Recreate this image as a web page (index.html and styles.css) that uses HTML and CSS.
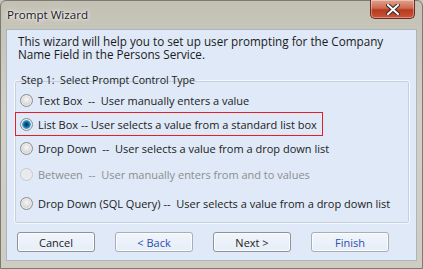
FILE: index.html
```html
<!DOCTYPE html>
<html lang="en">

<head>
    <meta charset="UTF-8" />
    <title>Prompt Wizard</title>
    <link rel="stylesheet" href="styles.css">
</head>

<body>
    <div class="window">
        <div class="titlebar">
            <div class="title">Prompt Wizard</div>
            <button class="close" aria-label="Close">
                <svg width="14" height="11" viewBox="0 0 14 11">
                    <path d="M2 1 L12 10 M12 1 L2 10" stroke="#3b2a2a" stroke-width="4" stroke-linecap="square" />
                    <path d="M2 1 L12 10 M12 1 L2 10" stroke="#ffffff" stroke-width="2" stroke-linecap="square" />
                </svg>
            </button>
        </div>

        <div class="client">
            <p class="intro">This wizard will help you to set up user prompting for the Company<br>Name Field in the Persons Service.</p>

            <fieldset class="group">
                <legend>Step 1:&nbsp; Select Prompt Control Type</legend>
                <div class="option">
                    <span class="radio"></span>
                    <span class="text">Text Box&nbsp; --&nbsp; User manually enters a value</span>
                </div>
                <div class="option selected">
                    <span class="radio checked"></span>
                    <span class="text">List Box -- User selects a value from a standard list box</span>
                </div>
                <div class="option">
                    <span class="radio"></span>
                    <span class="text">Drop Down&nbsp; --&nbsp; User selects a value from a drop down list</span>
                </div>
                <div class="option disabled">
                    <span class="radio"></span>
                    <span class="text">Between&nbsp; --&nbsp; User manually enters from and to values</span>
                </div>
                <div class="option last">
                    <span class="radio"></span>
                    <span class="text">Drop Down (SQL Query) --&nbsp; User selects a value from a drop down list</span>
                </div>
            </fieldset>

            <div class="buttons">
                <button class="btn">Cancel</button>
                <button class="btn blue">&lt; Back</button>
                <button class="btn">Next &gt;</button>
                <button class="btn blue">Finish</button>
            </div>
        </div>
    </div>
</body>

</html>
```

FILE: styles.css
```css
* {
    box-sizing: border-box;
    margin: 0;
    padding: 0;
}

body {
    width: 423px;
    height: 269px;
    font-family: 'Open Sans', 'DejaVu Sans', sans-serif;
    font-size: 11px;
    color: #1b1b1b;
    background: #c8c5ba;
    overflow: hidden;
}

.window {
    height: 269px;
    padding: 0 5px 7px 5px;
    display: flex;
    flex-direction: column;
    background: linear-gradient(#c3c0b4, #d2cfc5 40%, #cfccc1);
    border: 1px solid #7b7a74;
    border-radius: 6px 6px 0 0;
}

.titlebar {
    height: 28px;
    display: flex;
    justify-content: space-between;
    align-items: flex-start;
}

.title {
    margin-top: 6px;
    margin-left: 1px;
    font-size: 11.6px;
    color: #1a1a2a;
    text-shadow: 0 0 6px #ffffff, 0 0 3px #ffffff;
}

.close {
    width: 45px;
    height: 19px;
    margin-top: -1px;
    margin-right: 2px;
    border: 1px solid #6b2a22;
    border-top: none;
    border-radius: 0 0 5px 5px;
    background: linear-gradient(#e0a38f, #cf6a4f 45%, #b73a1f 55%, #c9553a);
    box-shadow: inset 0 0 0 1px rgba(255, 255, 255, 0.35);
    display: flex;
    align-items: center;
    justify-content: center;
}

.client {
    flex: 1;
    background: #dfe9f7;
    border: 1px solid #a8b5c6;
    padding: 5px 6px 0 7px;
}

.intro {
    margin-left: 4px;
    font-size: 11.7px;
    line-height: 12.5px;
}

.group {
    margin-top: 12px;
    height: 152px;
    border: 1px solid #f4f7fb;
    border-radius: 3px;
    box-shadow: inset 0 0 0 1px #c6d1df;
    padding: 0;
}

.group legend {
    margin-left: 4px;
    padding: 0 2px;
    font-size: 10.6px;
    line-height: 16px;
    white-space: pre;
}

.option {
    height: 24px;
    display: flex;
    align-items: center;
    gap: 5px;
    padding-left: 4px;
    border: 1px solid transparent;
    white-space: nowrap;
    width: 308px;
}

.option.selected {
    border-color: #e3202a;
}

.option.disabled {
    margin-top: 2px;
    color: #8e8e8e;
}

.option.last {
    margin-top: 5px;
}

.radio {
    width: 13px;
    height: 13px;
    border-radius: 50%;
    border: 1px solid #8d8d8d;
    background: radial-gradient(circle at 50% 40%, #f6f6f6, #d2d2d2 70%, #c0c0c0);
    box-shadow: inset 0 0 0 1px #ececec;
    flex: none;
}

.option.disabled .radio {
    border-color: #c5c9cf;
    background: #e8ebee;
}

.radio.checked {
    background: radial-gradient(circle, #0c2b46 0, #0d5a8a 2px, #3aa0d6 4px, #c9e6f6 5px, #e6e6e6 6px);
}

.buttons {
    margin-top: 8px;
    display: flex;
    gap: 20px;
    padding-left: 3px;
}

.btn {
    width: 78px;
    height: 20px;
    font-family: inherit;
    font-size: 11px;
    color: #1b1b1b;
    background: linear-gradient(#f1f5fb, #e6eef9);
    border: 1px solid #8f9298;
    border-radius: 3px;
    box-shadow: inset 0 0 0 1px #fbfcfe;
}

.btn.blue {
    color: #2a4dae;
    border-color: #a9adb4;
}
```
